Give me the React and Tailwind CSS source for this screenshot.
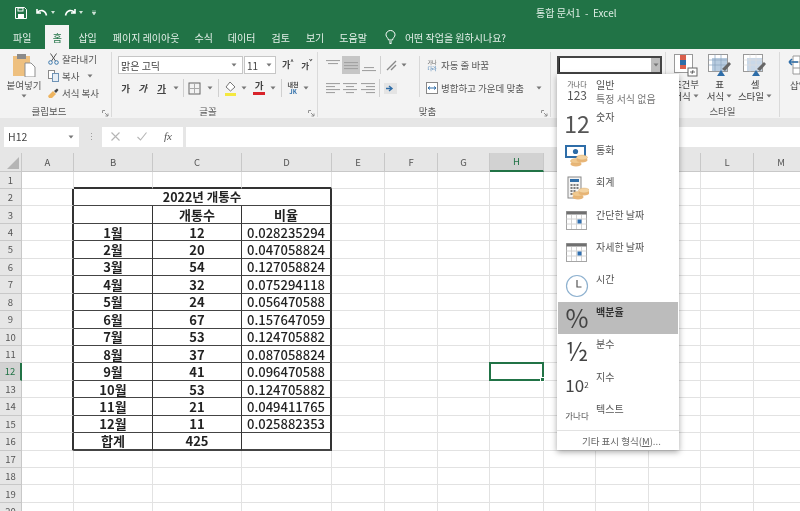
import { Fragment } from "react";

const colWidths = [22, 52, 79, 89, 90, 53, 53, 52, 54, 52, 53, 52, 53, 55];
const colNames = ["A", "B", "C", "D", "E", "F", "G", "H", "I", "J", "K", "L", "M"];

const months = [
  ["1월", "12", "0.028235294"],
  ["2월", "20", "0.047058824"],
  ["3월", "54", "0.127058824"],
  ["4월", "32", "0.075294118"],
  ["5월", "24", "0.056470588"],
  ["6월", "67", "0.157647059"],
  ["7월", "53", "0.124705882"],
  ["8월", "37", "0.087058824"],
  ["9월", "41", "0.096470588"],
  ["10월", "53", "0.124705882"],
  ["11월", "21", "0.049411765"],
  ["12월", "11", "0.025882353"],
  ["합계", "425", ""],
];

function Caret({ className = "" }) {
  return (
    <svg width="6" height="4" viewBox="0 0 6 4" className={className}>
      <path d="M0.5 0.5 H5.5 L3 3.5 Z" fill="#777" />
    </svg>
  );
}

function Launcher() {
  return (
    <svg width="7" height="7" viewBox="0 0 7 7" className="shrink-0">
      <path d="M0.5 3 V0.5 H3 M3 3 L6 6 M6 3.5 V6 H3.5" fill="none" stroke="#888" strokeWidth="0.9" />
    </svg>
  );
}

function Lines({ rows }) {
  return (
    <svg width="16" height="14" viewBox="0 0 16 14" className="shrink-0">
      {rows.map((r, i) => (
        <rect key={i} x={r[0]} y={r[1]} width={r[2]} height="1.1" fill="#a2a2a2" />
      ))}
    </svg>
  );
}

function Calendar() {
  return (
    <svg width="22" height="20" viewBox="0 0 22 20">
      <rect x="0.5" y="0.5" width="20" height="18" fill="#fff" stroke="#a5a5a5" />
      <rect x="0.5" y="0.5" width="20" height="3" fill="#707070" />
      <path d="M0.5 8 H20.5 M0.5 13 H20.5 M5.5 4 V18 M10.5 4 V18 M15.5 4 V18" stroke="#d4d4d4" strokeWidth="1" />
      <rect x="11.5" y="8.5" width="4" height="4" fill="#2f6fb0" />
    </svg>
  );
}

function Coins({ x, y }) {
  return (
    <g transform={`translate(${x} ${y})`}>
      <ellipse cx="6" cy="9" rx="5.5" ry="2.4" fill="#e8b678" />
      <ellipse cx="6" cy="6" rx="5.5" ry="2.4" fill="#f0c990" stroke="#d9a35e" strokeWidth="0.4" />
      <ellipse cx="12" cy="5" rx="5.5" ry="2.4" fill="#e8b678" />
      <ellipse cx="12" cy="2.5" rx="5.5" ry="2.4" fill="#f3d3a2" stroke="#d9a35e" strokeWidth="0.4" />
    </g>
  );
}

function NumberFormatItem({ icon, label, sub, active }) {
  return (
    <div className={`mx-[1px] flex h-[32.4px] ${active ? "bg-[#bcbcbc]" : ""}`}>
      <div className="flex w-[38px] shrink-0 items-center justify-center">{icon}</div>
      <div className={`pt-[3px] text-[10px] leading-[14px] ${active ? "font-bold text-[#333]" : "text-[#555]"}`}>
        <div>{label}</div>
        {sub && <div className="text-[#777]">{sub}</div>}
      </div>
    </div>
  );
}

function NumberFormatMenu() {
  return (
    <div className="absolute left-[557px] top-[74px] h-[376px] w-[122px] bg-white pt-[1px] text-[#555] shadow-[0_2px_6px_rgba(0,0,0,0.35)]">
      <NumberFormatItem
        label="일반"
        sub="특정 서식 없음"
        icon={
          <div className="text-center leading-none text-[#555]">
            <div className="text-[7px]">가나다</div>
            <div className="mt-[1px] text-[12px]">123</div>
          </div>
        }
      />
      <NumberFormatItem label="숫자" icon={<span className="text-[23px] leading-none">12</span>} />
      <NumberFormatItem
        label="통화"
        icon={
          <svg width="24" height="24" viewBox="0 0 24 24">
            <rect x="1" y="2" width="19" height="11" fill="#fff" stroke="#2e6da8" strokeWidth="2" />
            <circle cx="10.5" cy="7.5" r="2.6" fill="#2e6da8" />
            <Coins x="5" y="11" />
          </svg>
        }
      />
      <NumberFormatItem
        label="회계"
        icon={
          <svg width="24" height="24" viewBox="0 0 24 24">
            <rect x="3" y="1" width="13" height="21" fill="#f4f4f4" stroke="#888" />
            <rect x="5" y="3" width="9" height="3" fill="#2e6da8" />
            <path d="M5.5 9 H13.5 M5.5 12 H13.5 M5.5 15 H11 M5.5 18 H10" stroke="#555" strokeWidth="1.6" strokeDasharray="2 1" />
            <Coins x="7" y="12" />
          </svg>
        }
      />
      <NumberFormatItem label="간단한 날짜" icon={<Calendar />} />
      <NumberFormatItem label="자세한 날짜" icon={<Calendar />} />
      <NumberFormatItem
        label="시간"
        icon={
          <svg width="24" height="24" viewBox="0 0 24 24">
            <circle cx="12" cy="12" r="10.5" fill="#fff" stroke="#8fb2d0" strokeWidth="1.2" />
            <path d="M12 6 V13 H16.5" fill="none" stroke="#555" strokeWidth="1.2" />
          </svg>
        }
      />
      <NumberFormatItem label="백분율" active icon={<span className="text-[25px] leading-none text-[#444]">%</span>} />
      <NumberFormatItem label="분수" icon={<span className="text-[25px] leading-none text-[#444]">½</span>} />
      <NumberFormatItem
        label="지수"
        icon={
          <span className="mt-[4px] text-[17px] leading-none text-[#444]">
            10<sup className="text-[8px]">2</sup>
          </span>
        }
      />
      <NumberFormatItem label="텍스트" icon={<span className="text-[8.5px] leading-none">가나다</span>} />
      <div className="mt-[-1px] border-t border-[#e2e2e2] pt-[3px] pl-[25px] text-[9.5px] leading-[14px] text-[#666]">
        기타 표시 형식(<span className="underline">M</span>)...
      </div>
    </div>
  );
}

function TitleBar() {
  return (
    <div className="flex h-[25px] items-center bg-[#217346] pl-[15px] text-white">
      <svg width="12" height="12" viewBox="0 0 12 12" className="mr-[9px]">
        <path d="M0.5 0.5 H9.5 L11.5 2.5 V11.5 H0.5 Z" fill="none" stroke="#fff" />
        <rect x="3" y="1" width="5" height="3" fill="none" stroke="#fff" />
        <rect x="3" y="7" width="6" height="4" fill="#fff" />
      </svg>
      <svg width="12" height="10" viewBox="0 0 12 10">
        <path d="M1 1 V5 H5 M1.5 4.5 C4 1.5 9 1.5 10.5 7.5" fill="none" stroke="#fff" strokeWidth="1.6" />
      </svg>
      <svg width="4" height="3" viewBox="0 0 4 3" className="ml-[3px] mr-[9px]">
        <path d="M0 0 H4 L2 3 Z" fill="#cfe3d7" />
      </svg>
      <svg width="12" height="10" viewBox="0 0 12 10">
        <path d="M11 1 V5 H7 M10.5 4.5 C8 1.5 3 1.5 1.5 7.5" fill="none" stroke="#fff" strokeWidth="1.6" />
      </svg>
      <svg width="4" height="3" viewBox="0 0 4 3" className="ml-[3px] mr-[9px]">
        <path d="M0 0 H4 L2 3 Z" fill="#cfe3d7" />
      </svg>
      <svg width="4" height="5" viewBox="0 0 4 5">
        <path d="M0 0 H4 M0 2 H4 L2 5 Z" stroke="#cfe3d7" strokeWidth="0.6" fill="#cfe3d7" />
      </svg>
      <span className="ml-[440px] text-[10px] text-[#dfeee5]">통합 문서1&nbsp; -&nbsp; Excel</span>
    </div>
  );
}

function Tabs() {
  const tabs = [
    ["파일", "ml-[13px]"],
    ["홈", "ml-[14px]", true],
    ["삽입", "ml-[9px]"],
    ["페이지 레이아웃", "ml-[16px]"],
    ["수식", "ml-[15px]"],
    ["데이터", "ml-[15px]"],
    ["검토", "ml-[16px]"],
    ["보기", "ml-[16px]"],
    ["도움말", "ml-[15px]"],
  ];
  return (
    <div className="flex h-[24px] items-center bg-[#217346] text-[10px] text-[#e4f0e9]">
      {tabs.map(([name, gap, active]) =>
        active ? (
          <div key={name} className={`${gap} flex h-full w-[24px] items-center justify-center bg-[#f3f3f3] text-[#217346]`}>
            {name}
          </div>
        ) : (
          <div key={name} className={gap}>
            {name}
          </div>
        )
      )}
      <svg width="11" height="14" viewBox="0 0 11 14" className="ml-[18px]">
        <path d="M3.5 10 C3 7.5 1 7 1 4.8 A4.5 4.3 0 0 1 10 4.8 C10 7 8 7.5 7.5 10 Z M4 12 H7 M4.5 13.5 H6.5" fill="none" stroke="#fff" strokeWidth="1" />
      </svg>
      <div className="ml-[9px]">어떤 작업을 원하시나요?</div>
    </div>
  );
}

function Group({ label, width, launcher = true, children }) {
  return (
    <div className="flex h-full shrink-0 flex-col pt-[3px] pb-[1px]" style={{ width }}>
      <div className="relative flex h-full flex-col border-r border-[#dadada]">
        <div className="flex-1">{children}</div>
        <div className={`relative flex h-[12px] items-center justify-center text-[9.5px] text-[#555] ${launcher ? "pr-[13px]" : ""}`}>
          {label}
          {launcher && (
            <div className="absolute bottom-[0px] right-[2px]">
              <Launcher />
            </div>
          )}
        </div>
      </div>
    </div>
  );
}

function ClipboardGroup() {
  return (
    <Group label="클립보드" width={112}>
      <div className="flex text-[#555]">
        <div className="flex w-[48px] flex-col items-center pt-[1px]">
          <svg width="24" height="24" viewBox="0 0 24 24">
            <rect x="1" y="3" width="17" height="20" fill="#eec07f" />
            <rect x="5" y="1" width="9" height="5" fill="#8a8a8a" />
            <path d="M13 10 H19 L23 14 V24 H13 Z" fill="#fff" stroke="#8f8f8f" />
          </svg>
          <div className="mt-[1px] whitespace-nowrap text-[9.5px] leading-[14px]">붙여넣기</div>
          <Caret className="mt-[2px]" />
        </div>
        <div className="flex flex-col gap-[3px] text-[9.5px] leading-[14px]">
          <div className="flex items-center gap-[3px]">
            <svg width="11" height="12" viewBox="0 0 11 12">
              <path d="M2.5 0.5 L7.5 8 M8.5 0.5 L3.5 8" stroke="#555" strokeWidth="1" />
              <circle cx="2.5" cy="9.5" r="1.8" fill="none" stroke="#3b78ad" />
              <circle cx="8.5" cy="9.5" r="1.8" fill="none" stroke="#3b78ad" />
            </svg>
            잘라내기
          </div>
          <div className="flex items-center gap-[3px]">
            <svg width="11" height="12" viewBox="0 0 11 12">
              <rect x="0.5" y="0.5" width="6" height="8" fill="#fff" stroke="#8a8a8a" />
              <rect x="4.5" y="3.5" width="6" height="8" fill="#e6eef6" stroke="#6f93b6" />
            </svg>
            복사
            <Caret className="ml-[5px]" />
          </div>
          <div className="flex items-center gap-[3px]">
            <svg width="11" height="10" viewBox="0 0 11 10">
              <path d="M0 8 L5 3 L8 6 L4 10 H1 Z" fill="#eeb45f" />
              <path d="M6 3 L9 0.5 L10.5 2 L8 5 Z" fill="#444" />
            </svg>
            서식 복사
          </div>
        </div>
      </div>
    </Group>
  );
}

function FontGroup() {
  return (
    <Group label="글꼴" width={206}>
      <div className="pl-[6px] pt-[4px] text-[#444]">
        <div className="flex h-[18px] items-stretch">
          <div className="flex w-[125px] items-center justify-between border border-[#c6c6c6] bg-white pl-[2px] pr-[5px] text-[10px]">
            맑은 고딕
            <Caret />
          </div>
          <div className="ml-[1px] flex w-[32px] items-center justify-between border border-[#c6c6c6] bg-white pl-[2px] pr-[3px] text-[10px]">
            11
            <Caret />
          </div>
          <div className="ml-[3px] flex w-[18px] items-center justify-center text-[9px] font-bold">가<sup className="text-[6px]">^</sup></div>
          <div className="ml-[1px] flex w-[18px] items-center justify-center text-[8.5px] font-bold">가<sup className="text-[6px]">ˇ</sup></div>
        </div>
        <div className="mt-[5px] flex h-[18px] items-center text-[9.5px] font-bold">
          <span className="w-[15px] text-center">가</span>
          <span className="w-[19px] text-center italic">가</span>
          <span className="w-[19px] text-center underline">가</span>
          <Caret className="ml-[2px]" />
          <div className="ml-[4px] h-[18px] border-l border-[#d0d0d0]" />
          <svg width="13" height="13" viewBox="0 0 13 13" className="ml-[4px]">
            <rect x="1" y="1" width="11" height="11" fill="none" stroke="#666" />
            <path d="M6.5 1 V12 M1 6.5 H12" stroke="#aaa" />
          </svg>
          <Caret className="ml-[6px]" />
          <div className="ml-[5px] h-[18px] border-l border-[#d0d0d0]" />
          <svg width="13" height="15" viewBox="0 0 13 15" className="ml-[5px]">
            <path d="M6 1 L11 6 L6.5 10 L2 6 Z" fill="#fff" stroke="#777" />
            <rect x="1" y="12" width="11" height="3" fill="#f4e840" />
          </svg>
          <Caret className="ml-[4px]" />
          <div className="ml-[6px] flex flex-col items-center leading-none">
            <span className="text-[9.5px]">가</span>
            <span className="mt-[1px] h-[3px] w-[12px] bg-[#d8232a]" />
          </div>
          <Caret className="ml-[5px]" />
          <div className="ml-[5px] h-[18px] border-l border-[#d0d0d0]" />
          <div className="ml-[5px] flex w-[12px] flex-col items-center text-[6px] leading-[7px]">
            <span>내천</span>
            <span className="text-[#2e6da8]">JK</span>
          </div>
          <Caret className="ml-[4px]" />
        </div>
      </div>
    </Group>
  );
}

function AlignmentGroup() {
  const top = [[1, 2, 14], [3, 5, 10]];
  const mid = [[1, 4, 14], [1, 7, 14], [1, 10, 14]];
  const bot = [[3, 9, 10], [1, 12, 14]];
  const left = [[1, 2, 14], [1, 5, 9], [1, 8, 14], [1, 11, 9]];
  const ctr = [[1, 2, 14], [4, 5, 8], [1, 8, 14], [4, 11, 8]];
  const right = [[1, 2, 14], [6, 5, 9], [1, 8, 14], [6, 11, 9]];
  return (
    <Group label="맞춤" width={233}>
      <div className="flex pl-[7px] pt-[4px] text-[#555]">
        <div className="flex w-[95px] flex-col border-r border-[#d8d8d8]">
          <div className="flex h-[18px] items-center">
            <Lines rows={top} />
            <div className="ml-[1px] flex h-[18px] w-[18px] items-center justify-center bg-[#c6c6c6]">
              <Lines rows={mid} />
            </div>
            <div className="ml-[1px]">
              <Lines rows={bot} />
            </div>
            <div className="ml-[3px] h-[18px] border-l border-[#d0d0d0]" />
            <svg width="13" height="13" viewBox="0 0 13 13" className="ml-[4px]">
              <path d="M2 11 L11 2 M6 11 L11 6" stroke="#888" strokeWidth="1.4" />
            </svg>
            <Caret className="ml-[3px]" />
          </div>
          <div className="mt-[5px] flex h-[18px] items-center">
            <Lines rows={left} />
            <span className="ml-[1px]"><Lines rows={ctr} /></span>
            <span className="ml-[2px]"><Lines rows={right} /></span>
            <div className="ml-[3px] h-[18px] border-l border-[#d0d0d0]" />
            <svg width="13" height="13" viewBox="0 0 13 13" className="ml-[4px]">
              <rect x="0" y="1" width="13" height="11" fill="#e4e4e4" />
              <path d="M2 6.5 H7 M5 4 L8 6.5 L5 9" fill="none" stroke="#2e6da8" strokeWidth="1.4" />
            </svg>
          </div>
        </div>
        <div className="flex flex-col pl-[6px] text-[9.5px]">
          <div className="flex h-[18px] items-center gap-[3px]">
            <div className="flex w-[12px] flex-col items-center text-[5px] leading-[6px]">
              <span>가나</span>
              <span className="text-[#2e6da8]">다라</span>
            </div>
            자동 줄 바꿈
          </div>
          <div className="mt-[5px] flex h-[18px] items-center gap-[3px]">
            <svg width="12" height="12" viewBox="0 0 12 12">
              <rect x="0.5" y="0.5" width="11" height="11" fill="#fff" stroke="#888" />
              <path d="M2 6 H10 M2 6 L4 4.5 M2 6 L4 7.5 M10 6 L8 4.5 M10 6 L8 7.5" stroke="#2e6da8" fill="none" />
            </svg>
            <span className="whitespace-nowrap">병합하고 가운데 맞춤</span>
            <Caret className="ml-[9px]" />
          </div>
        </div>
      </div>
    </Group>
  );
}

function StyleIcon({ kind }) {
  if (kind === "cond") {
    return (
      <svg width="24" height="23" viewBox="0 0 24 23">
        <rect x="0.5" y="0.5" width="18" height="18" fill="#fff" stroke="#999" />
        <rect x="6" y="1" width="6" height="5" fill="#d95f4c" />
        <rect x="6" y="6" width="6" height="5" fill="#2e6da8" />
        <rect x="6" y="11" width="6" height="4" fill="#d95f4c" />
        <rect x="14" y="14" width="9" height="8" fill="#fff" stroke="#666" />
        <path d="M16 18 H21 M19 16 L18 20" stroke="#444" strokeWidth="0.8" />
      </svg>
    );
  }
  return (
    <svg width="24" height="23" viewBox="0 0 24 23">
      <rect x="0.5" y="0.5" width="19" height="17" fill="#fff" stroke="#999" />
      <rect x="4" y="4" width="15" height="13" fill={kind === "table" ? "#b8cce0" : "#c9d8e8"} />
      <path d="M0.5 6 H19.5 M0.5 11 H19.5 M7 0.5 V17.5 M13 0.5 V17.5" stroke={kind === "table" ? "#8aa4bd" : "#dcdcdc"} strokeWidth="0.7" />
      <path d="M9 22 L13 16 L17 22 Z" fill="#2e6da8" />
      <path d="M14 15 L21 8 L23 10 L17 17 Z" fill="#666" />
    </svg>
  );
}

function StyleButton({ width, kind, lines }) {
  return (
    <div className="flex shrink-0 flex-col items-center whitespace-nowrap text-[9.5px] leading-[12px] text-[#444]" style={{ width }}>
      <StyleIcon kind={kind} />
      <div className="mt-[1px]">{lines[0]}</div>
      <div className="flex items-center gap-[2px]">
        {lines[1]}
        <Caret />
      </div>
    </div>
  );
}

function NumberGroup() {
  return (
    <Group label="" width={115} launcher={false}>
      <div className="pl-[6px] pt-[4px]">
        <div className="flex h-[18px] w-[105px] border-2 border-[#444] bg-white">
          <div className="h-full w-px bg-[#222]" />
          <div className="ml-auto flex w-[9px] items-center justify-center bg-[#bdbdbd]">
            <Caret />
          </div>
        </div>
      </div>
    </Group>
  );
}

function Ribbon() {
  return (
    <div className="flex h-[69px] overflow-hidden bg-[#f3f3f3]">
      <ClipboardGroup />
      <FontGroup />
      <AlignmentGroup />
      <NumberGroup />
      <Group label="스타일" width={114} launcher={false}>
        <div className="flex pl-[2px] pt-[2px]">
          <StyleButton width={36} kind="cond" lines={["조건부", "서식"]} />
          <StyleButton width={31} kind="table" lines={["표", "서식"]} />
          <StyleButton width={40} kind="cell" lines={["셀", "스타일"]} />
        </div>
      </Group>
      <div className="shrink-0 pl-[8px] pt-[5px] text-[9.5px] text-[#444]">
        <svg width="22" height="23" viewBox="0 0 22 23">
          <path d="M5 2 H20 V20 H5 Z M5 8 H20 M5 14 H20 M12 2 V20" fill="#fff" stroke="#999" />
          <path d="M1 8 H10 M1 8 L4 5 M1 8 L4 11" fill="none" stroke="#2e6da8" strokeWidth="1.5" />
        </svg>
        <div className="mt-[1px] whitespace-nowrap pl-[2px]">삽입</div>
      </div>
    </div>
  );
}

function FormulaBar() {
  return (
    <div className="flex h-[35px] items-center bg-[#e6e6e6] pt-[2px] text-[#444]">
      <div className="ml-[4px] flex h-[20px] w-[75px] items-center justify-between bg-white pl-[4px] pr-[5px] text-[10.5px]">
        H12
        <Caret />
      </div>
      <span className="ml-[10px] flex w-[4px] justify-center text-[9px] text-[#999]">⋮</span>
      <div className="ml-[9px] flex h-[20px] w-[81px] items-center gap-[17px] bg-white pl-[9px]">
        <svg width="9" height="9" viewBox="0 0 9 9">
          <path d="M0.5 0.5 L8.5 8.5 M8.5 0.5 L0.5 8.5" stroke="#b5b5b5" strokeWidth="1.1" />
        </svg>
        <svg width="10" height="9" viewBox="0 0 10 9">
          <path d="M0.5 5 L3.5 8 L9.5 0.5" fill="none" stroke="#b5b5b5" strokeWidth="1.1" />
        </svg>
        <span className="font-['Liberation_Serif',serif] text-[11px] italic text-[#555]">fx</span>
      </div>
      <div className="ml-[3px] h-[20px] flex-1 bg-white" />
    </div>
  );
}

function Cell({ row, col }) {
  // 표 영역: B~D 열, 2~16 행
  const inTable = row >= 2 && row <= 16 && col >= 1 && col <= 3;
  let cls = "border-r border-b border-[#e2e2e2]";
  if (inTable) {
    cls = `border-r border-b border-r-[#333] border-b-[#444] ${col === 3 ? "border-r-2" : ""} ${row === 16 ? "border-b-2" : ""}`;
  } else if (row === 1 && col >= 1 && col <= 3) {
    cls = "border-r border-b-2 border-r-[#e2e2e2] border-b-[#333]";
  } else if (col === 0 && row >= 2 && row <= 16) {
    cls = "border-r-2 border-b border-r-[#333] border-b-[#e2e2e2]";
  }

  const selected = row === 12 && col === 7;
  let text = "";
  if (row === 3 && col === 2) text = "개통수";
  if (row === 3 && col === 3) text = "비율";
  if (row >= 4 && row <= 16 && col >= 1 && col <= 3) text = months[row - 4][col - 1];
  const weight = col === 3 && row >= 4 ? "font-medium" : "font-semibold";

  return (
    <div className={`relative flex min-w-0 items-center justify-center whitespace-nowrap text-[13px] leading-none text-[#222] ${weight} ${cls}`}>
      {text}
      {selected && (
        <div className="absolute inset-[-1px] z-10 border-2 border-[#217346]">
          <div className="absolute bottom-[-3px] right-[-3px] h-[5px] w-[5px] border border-white bg-[#217346]" />
        </div>
      )}
    </div>
  );
}

function Sheet() {
  const rows = Array.from({ length: 20 }, (_, i) => i + 1);
  return (
    <div
      className="grid overflow-hidden bg-white"
      style={{
        gridTemplateColumns: colWidths.map((w) => `${w}px`).join(" "),
        gridTemplateRows: "19px 17px repeat(19, 17.45px)",
      }}
    >
      <div className="relative border-r border-b border-[#c8c8c8] bg-[#e6e6e6]">
        <svg width="12" height="12" viewBox="0 0 12 12" className="absolute bottom-[2px] right-[2px]">
          <path d="M12 0 V12 H0 Z" fill="#b5b5b5" />
        </svg>
      </div>
      {colNames.map((name) => (
        <div
          key={name}
          className={`flex items-center justify-center border-r border-b text-[9.5px] ${
            name === "H" ? "border-r-[#c8c8c8] border-b-2 border-b-[#217346] bg-[#d2d2d2] text-[#217346]" : "border-[#c8c8c8] bg-[#e6e6e6] text-[#555]"
          }`}
        >
          {name}
        </div>
      ))}
      {rows.map((row) => (
        <Fragment key={row}>
          <div
            className={`flex items-center justify-center border-b text-[9.5px] ${
              row === 12 ? "border-r-2 border-b-[#c8c8c8] border-r-[#217346] bg-[#d2d2d2] text-[#217346]" : "border-r border-[#c8c8c8] bg-[#e6e6e6] text-[#555]"
            }`}
          >
            {row}
          </div>
          {colNames.map((_, col) => {
            if (row === 2 && col === 1) {
              return (
                <div key={col} className="col-span-3 flex items-center justify-center border-r-2 border-b border-r-[#333] border-b-[#444] text-[12.5px] font-semibold text-[#222]">
                  2022년 개통수
                </div>
              );
            }
            if (row === 2 && (col === 2 || col === 3)) return null;
            return <Cell key={col} row={row} col={col} />;
          })}
        </Fragment>
      ))}
    </div>
  );
}

export default function App() {
  return (
    <div className="relative h-[511px] w-[800px] overflow-hidden bg-white font-['Noto_Sans_CJK_KR','Liberation_Sans',sans-serif] blur-[0.4px]">
      <TitleBar />
      <Tabs />
      <Ribbon />
      <FormulaBar />
      <Sheet />
      <NumberFormatMenu />
    </div>
  );
}
